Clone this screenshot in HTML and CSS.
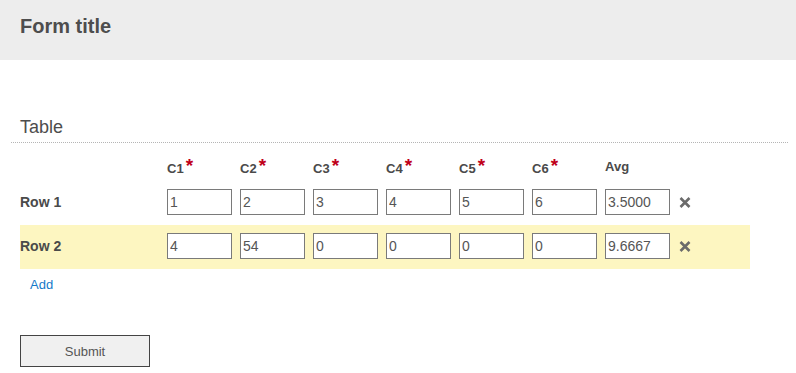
FILE: index.html
```html
<!DOCTYPE html>
<html>
<head>
<meta charset="utf-8">
<link rel="stylesheet" href="styles.css">
</head>
<body>
<header class="page-header"><h1 class="form-title">Form title</h1></header>
<section class="section">
  <h2 class="section-title">Table</h2>
</section>
<div class="grid-table">
  <div class="grid-row head-row">
    <div class="row-label"></div>
    <div class="col-head">C1<span class="req">*</span></div>
    <div class="col-head">C2<span class="req">*</span></div>
    <div class="col-head">C3<span class="req">*</span></div>
    <div class="col-head">C4<span class="req">*</span></div>
    <div class="col-head">C5<span class="req">*</span></div>
    <div class="col-head">C6<span class="req">*</span></div>
    <div class="col-head">Avg</div>
    <div></div>
  </div>
  <div class="grid-row data-row">
    <div class="row-label">Row 1</div>
    <input class="cell" value="1">
    <input class="cell" value="2">
    <input class="cell" value="3">
    <input class="cell" value="4">
    <input class="cell" value="5">
    <input class="cell" value="6">
    <input class="cell" value="3.5000">
    <span class="remove"><svg width="12" height="11" viewBox="0 0 12 11"><path d="M1.5 1 L10.5 10 M10.5 1 L1.5 10" stroke="#6b6b6b" stroke-width="2.6" fill="none"/></svg></span>
  </div>
  <div class="grid-row data-row highlight">
    <div class="row-label">Row 2</div>
    <input class="cell" value="4">
    <input class="cell" value="54">
    <input class="cell" value="0">
    <input class="cell" value="0">
    <input class="cell" value="0">
    <input class="cell" value="0">
    <input class="cell" value="9.6667">
    <span class="remove"><svg width="12" height="11" viewBox="0 0 12 11"><path d="M1.5 1 L10.5 10 M10.5 1 L1.5 10" stroke="#6b6b6b" stroke-width="2.6" fill="none"/></svg></span>
  </div>
  <a class="add-link" href="#">Add</a>
</div>
<div class="actions"><button class="submit-btn">Submit</button></div>
</body>
</html>
```
FILE: styles.css
```css
html, body {
  margin: 0;
  padding: 0;
  background: #fff;
  font-family: "Liberation Sans", Arial, sans-serif;
  color: #4a4a4a;
}
.page-header {
  height: 60px;
  box-sizing: border-box;
  background: #ededed;
  padding: 14px 20px 0;
}
.form-title {
  margin: 0;
  font-size: 20px;
  line-height: 24px;
  font-weight: bold;
  color: #4d4d4d;
}
.section {
  margin: 56px 8px 0 11px;
}
.section-title {
  margin: 0;
  padding: 0 0 4px 9px;
  font-size: 18px;
  line-height: 22px;
  font-weight: normal;
  color: #4d4d4d;
  border-bottom: 1px dotted #b5b5b5;
}
.grid-table {
  width: 730px;
  margin: 0 20px;
}
.grid-row {
  display: grid;
  grid-template-columns: 139px repeat(7, 65px) 1fr;
  column-gap: 8px;
  align-items: center;
}
.head-row {
  height: 38px;
  align-items: start;
  padding-top: 16px;
  box-sizing: border-box;
}
.col-head {
  font-size: 13px;
  line-height: 16px;
  font-weight: bold;
  color: #4a4a4a;
}
.req {
  color: #c0001a;
  font-size: 19px;
  line-height: 16px;
  position: relative;
  top: -1px;
  margin-left: 2px;
  font-weight: bold;
}
.data-row {
  padding: 8px 0 10px;
}
.highlight {
  background: #fdf6c1;
}
.row-label {
  font-size: 14px;
  font-weight: bold;
  color: #4a4a4a;
}
.cell {
  width: 65px;
  height: 26px;
  box-sizing: border-box;
  margin: 0;
  padding: 0 2px;
  border: 1px solid #7a7a7a;
  background: #fff;
  font-family: "Liberation Sans", Arial, sans-serif;
  font-size: 14px;
  color: #555;
}
.remove {
  display: flex;
  margin-left: 1px;
}
.add-link {
  display: block;
  margin-top: 8px;
  padding-left: 10px;
  font-size: 13px;
  line-height: 16px;
  color: #1479c9;
  text-decoration: none;
}
.actions {
  padding: 42px 20px 0;
}
.submit-btn {
  width: 130px;
  height: 32px;
  margin: 0;
  border: 1px solid #444;
  background: #f0f0f0;
  font-family: "Liberation Sans", Arial, sans-serif;
  font-size: 13px;
  color: #555;
}
```
